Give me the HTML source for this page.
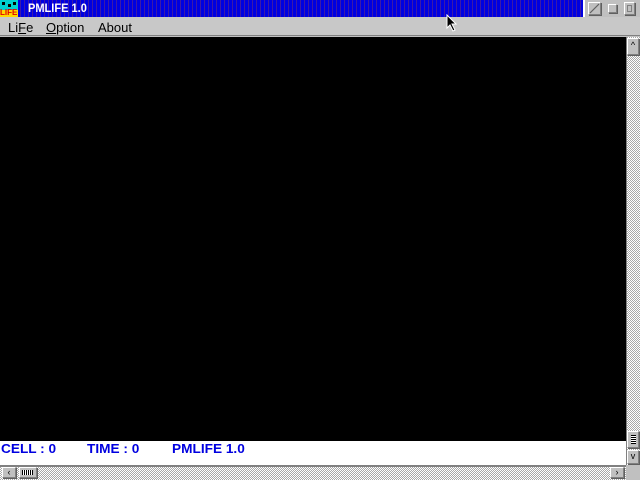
<!DOCTYPE html>
<html><head><style>
*{margin:0;padding:0;box-sizing:border-box}
body{width:640px;height:480px;overflow:hidden;background:#c0c0c0;position:relative;font-family:"Liberation Sans",sans-serif}
.abs{position:absolute}
.title{left:18px;top:0;width:567px;height:17px;background-color:#1010c8;
 background-image:repeating-linear-gradient(90deg,#0000e0 0 2px,#3a1aa8 2px 3px,#0000e0 3px 4px);border-right:2px solid #fff}
.title span{position:absolute;left:10px;top:0;color:#fff;font-weight:bold;font-size:12px;line-height:17px;transform:scaleX(0.92);transform-origin:left}
.check{background-color:#c8c8c8;background-image:conic-gradient(#fff 25%,#a8a8a8 0 50%,#fff 0 75%,#a8a8a8 0);background-size:2px 2px}
.btn{background:#c0c0c0;border:1px solid;border-color:#fff #808080 #808080 #fff;box-shadow:1px 1px 0 #606060}
.menu{top:17px;left:0;width:640px;height:19px;background:#c8c8c8;border-bottom:1px solid #808080;font-size:13px}
.menu span{position:absolute;top:3px}
.status{left:0;top:441px;width:626px;height:24px;background:#fff;color:#0000e0;font-size:13px;font-weight:bold}
.status span{position:absolute;top:0px;transform:scaleX(1.05);transform-origin:left}
</style></head><body>
<div class="abs" style="left:0;top:0;width:18px;height:17px;background:#ffd800">
 <div class="abs" style="left:0;top:0;width:18px;height:10px;background:#00d0d0"></div>
 <div class="abs" style="left:2px;top:2px;width:3px;height:3px;background:#000"></div>
 <div class="abs" style="left:8px;top:4px;width:3px;height:3px;background:#000"></div>
 <div class="abs" style="left:13px;top:2px;width:3px;height:3px;background:#000"></div>
 <div class="abs" style="left:0;top:9px;font-size:8px;font-weight:bold;color:#e00000;line-height:8px">LIFE</div>
</div>
<div class="abs title"><span>PMLIFE 1.0</span></div>
<div class="abs btn" style="left:588px;top:2px;width:13px;height:13px">
 <svg width="11" height="11" style="position:absolute;left:0;top:0"><line x1="1" y1="10" x2="10" y2="1" stroke="#606060" stroke-width="1.2"/></svg></div>
<div class="abs btn" style="left:608px;top:4px;width:9px;height:9px"></div>
<div class="abs btn" style="left:624px;top:2px;width:11px;height:13px"><div class="abs" style="left:2px;top:2px;width:5px;height:7px;border:1px solid #808080"></div></div>
<div class="abs menu">
 <span style="left:8px">Li<u>F</u>e</span>
 <span style="left:46px"><u>O</u>ption</span>
 <span style="left:98px">About</span>
</div>
<div class="abs" style="left:0;top:37px;width:626px;height:404px;background:#000"></div>
<div class="abs check" style="left:626px;top:37px;width:14px;height:428px;border-left:1px solid #808080"></div>
<div class="abs btn" style="left:627px;top:38px;width:12px;height:17px;font-size:9px;text-align:center;line-height:13px">^</div>
<div class="abs btn" style="left:627px;top:431px;width:12px;height:17px">
 <div class="abs" style="left:3px;top:3px;width:5px;height:9px;background:repeating-linear-gradient(#000 0 1px,#fff 1px 2px)"></div></div>
<div class="abs btn" style="left:627px;top:450px;width:12px;height:14px;font-size:9px;text-align:center;line-height:10px">v</div>
<div class="abs status">
 <span style="left:1px">CELL : 0</span>
 <span style="left:87px">TIME : 0</span>
 <span style="left:172px">PMLIFE 1.0</span>
</div>
<div class="abs check" style="left:0;top:465px;width:640px;height:15px;border-top:2px solid #808080"></div>
<div class="abs btn" style="left:2px;top:467px;width:14px;height:11px;font-size:9px;line-height:9px;text-align:center">&lsaquo;</div>
<div class="abs btn" style="left:19px;top:467px;width:18px;height:11px">
 <div class="abs" style="left:2px;top:2px;width:11px;height:5px;background:repeating-linear-gradient(90deg,#000 0 1px,#fff 1px 2px)"></div></div>
<div class="abs btn" style="left:610px;top:467px;width:14px;height:11px;font-size:9px;line-height:9px;text-align:center">&rsaquo;</div>
<div class="abs" style="left:626px;top:465px;width:14px;height:15px;background:#c0c0c0"></div>
<svg class="abs" style="left:446px;top:14px" width="12" height="18"><path d="M1 1 L1 14 L4 11 L7 17 L9 16 L6 10 L10 10 Z" fill="#000" stroke="#fff" stroke-width="1"/></svg>
</body></html>
